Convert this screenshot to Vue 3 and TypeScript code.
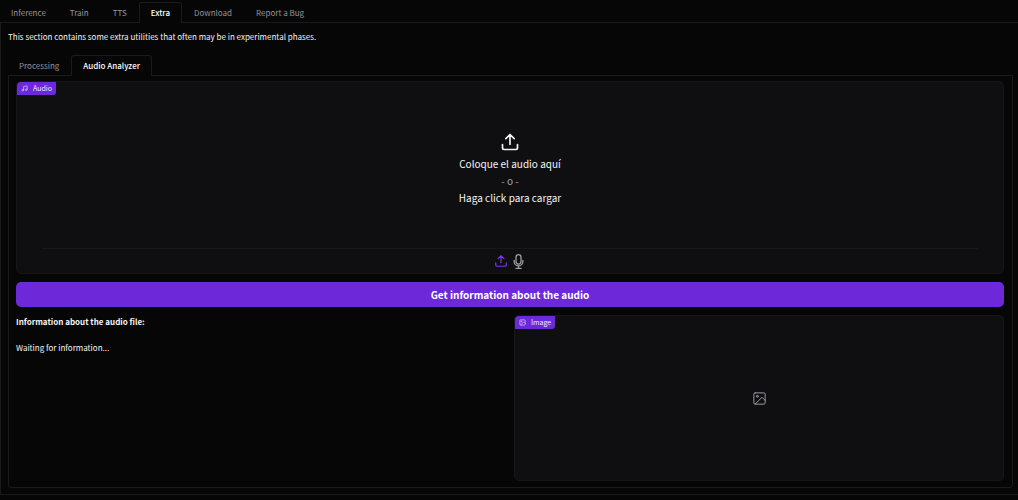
<script setup lang="ts">
import { ref } from 'vue'

const mainTabs: string[] = ['Inference', 'Train', 'TTS', 'Extra', 'Download', 'Report a Bug']
const extraTabs: string[] = ['Processing', 'Audio Analyzer']
const activeMain = ref('Extra')
const activeExtra = ref('Audio Analyzer')
</script>

<template>
  <main class="app">
    <nav class="tabs" role="tablist" aria-label="Main">
      <button
        v-for="tab in mainTabs"
        :key="tab"
        type="button"
        role="tab"
        class="tab"
        :class="{ active: tab === activeMain }"
        :aria-selected="tab === activeMain"
        @click="activeMain = tab"
      >{{ tab }}</button>
    </nav>
    <section class="outer-panel">
      <p class="intro">This section contains some extra utilities that often may be in experimental phases.</p>
      <nav class="tabs" role="tablist" aria-label="Extra">
        <button
          v-for="tab in extraTabs"
          :key="tab"
          type="button"
          role="tab"
          class="tab"
          :class="{ active: tab === activeExtra }"
          :aria-selected="tab === activeExtra"
          @click="activeExtra = tab"
        >{{ tab }}</button>
      </nav>
      <section class="inner-panel">
        <div class="block audio">
          <span class="badge">
            <svg viewBox="0 0 24 24" width="7" height="7" fill="none" stroke="currentColor" stroke-width="2">
              <path d="M9 18V5l12-2v13" />
              <circle cx="6" cy="18" r="3" />
              <circle cx="18" cy="16" r="3" />
            </svg>
            Audio
          </span>
          <button type="button" class="drop">
            <svg viewBox="0 0 24 24" width="20" height="20" fill="none" stroke="currentColor" stroke-width="2" stroke-linecap="round" stroke-linejoin="round">
              <path d="M3 15v4a2 2 0 0 0 2 2h14a2 2 0 0 0 2-2v-4M17 8l-5-5-5 5M12 3v12" />
            </svg>
            <span>Coloque el audio aquí</span>
            <span class="or">- o -</span>
            <span>Haga click para cargar</span>
          </button>
          <div class="sources">
            <button type="button" class="source selected" aria-label="Upload file">
              <svg viewBox="0 0 24 24" width="14" height="14" fill="none" stroke="currentColor" stroke-width="2" stroke-linecap="round" stroke-linejoin="round">
                <path d="M3 15v4a2 2 0 0 0 2 2h14a2 2 0 0 0 2-2v-4M17 8l-5-5-5 5M12 3v12" />
              </svg>
            </button>
            <button type="button" class="source" aria-label="Record audio">
              <svg viewBox="0 0 24 24" width="15" height="15" fill="none" stroke="currentColor" stroke-width="2" stroke-linecap="round" stroke-linejoin="round">
                <path d="M12 1a4 4 0 0 0-4 4v7a4 4 0 0 0 8 0V5a4 4 0 0 0-4-4zM19 10v2a7 7 0 0 1-14 0v-2M12 19v4M8 23h8" />
              </svg>
            </button>
          </div>
        </div>
        <button type="button" class="primary">Get information about the audio</button>
        <div class="results">
          <div class="info">
            <h2>Information about the audio file:</h2>
            <p>Waiting for information...</p>
          </div>
          <div class="block image">
            <span class="badge">
              <svg viewBox="0 0 24 24" width="7" height="7" fill="none" stroke="currentColor" stroke-width="2">
                <rect x="3" y="3" width="18" height="18" rx="2" />
                <circle cx="8.5" cy="8.5" r="1.5" />
                <path d="M21 15l-5-5L5 21" />
              </svg>
              Image
            </span>
            <svg class="placeholder" viewBox="0 0 24 24" width="15" height="15" fill="none" stroke="currentColor" stroke-width="1.5" stroke-linecap="round" stroke-linejoin="round">
              <rect x="3" y="3" width="18" height="18" rx="2" />
              <circle cx="8.5" cy="8.5" r="1.5" />
              <path d="M21 15l-5-5L5 21" />
            </svg>
          </div>
        </div>
      </section>
    </section>
  </main>
</template>

<style>
html,
body {
  background: #060606;
}
</style>

<style scoped>
.app {
  box-sizing: border-box;
  display: flex;
  flex-direction: column;
  min-height: 100vh;
  padding: 2px 0 5px;
  color: #f4f4f5;
  font-family: "Noto Sans CJK SC", "Noto Sans", sans-serif;
  font-size: 8px;
  line-height: 14px;
}

button {
  margin: 0;
  padding: 0;
  border: 0;
  background: none;
  color: inherit;
  font: inherit;
  cursor: pointer;
}

svg {
  display: block;
}

.tabs {
  display: flex;
  margin-left: -1px;
}

.tab {
  height: 20px;
  padding: 0 11px;
  border: 1px solid transparent;
  border-bottom: 0;
  border-radius: 3px 3px 0 0;
  color: #94949c;
}

.tabs .tab.active {
  position: relative;
  height: 21px;
  margin-bottom: -1px;
  border-color: #1b1b1e;
  background: #060606;
  color: #ffffff;
  font-weight: 500;
}

.outer-panel {
  flex: 1;
  display: flex;
  flex-direction: column;
  padding: 7px 5px 6px 7px;
  border: 1px solid #19191b;
  border-right: 0;
}

.intro {
  margin: 0 0 11px;
}

.inner-panel {
  flex: 1;
  display: flex;
  flex-direction: column;
  gap: 8px;
  padding: 5px 8px 6px 7px;
  border: 1px solid #1b1b1e;
  border-radius: 0 0 3px 3px;
}

.block {
  position: relative;
  box-sizing: border-box;
  border: 1px solid #161618;
  border-radius: 5px;
  background: #0f0f11;
}

.badge {
  position: absolute;
  top: 0;
  left: 0;
  display: flex;
  align-items: center;
  gap: 5px;
  padding: 0 4px;
  border-radius: 4px 0 3px 0;
  background: #6d28d9;
  color: #ede9fe;
  font-size: 7px;
  line-height: 13px;
}

.audio {
  display: flex;
  flex-direction: column;
  height: 193px;
}

.drop {
  flex: 1;
  display: flex;
  flex-direction: column;
  align-items: center;
  justify-content: center;
  padding-top: 8px;
  font-size: 10px;
  line-height: 17px;
}

.drop svg {
  margin-bottom: 3px;
}

.or {
  color: #a1a1aa;
}

.sources {
  display: flex;
  align-items: center;
  justify-content: center;
  gap: 3px;
  height: 24px;
  margin: 0 25px;
  border-top: 1px solid #18181b;
}

.source {
  color: #a1a1aa;
}

.source.selected {
  color: #7c3aed;
}

.primary {
  height: 25px;
  border-radius: 5px;
  background: #6d28d9;
  color: #ffffff;
  font-size: 10px;
  font-weight: 700;
}

.results {
  flex: 1;
  display: grid;
  grid-template-columns: 1fr 1fr;
  gap: 8px;
}

.info h2 {
  margin: 0 0 12px;
  font-size: 8px;
  font-weight: 700;
}

.info p {
  margin: 0;
}

.image {
  display: flex;
  align-items: center;
  justify-content: center;
}

.placeholder {
  color: #a1a1aa;
}
</style>
